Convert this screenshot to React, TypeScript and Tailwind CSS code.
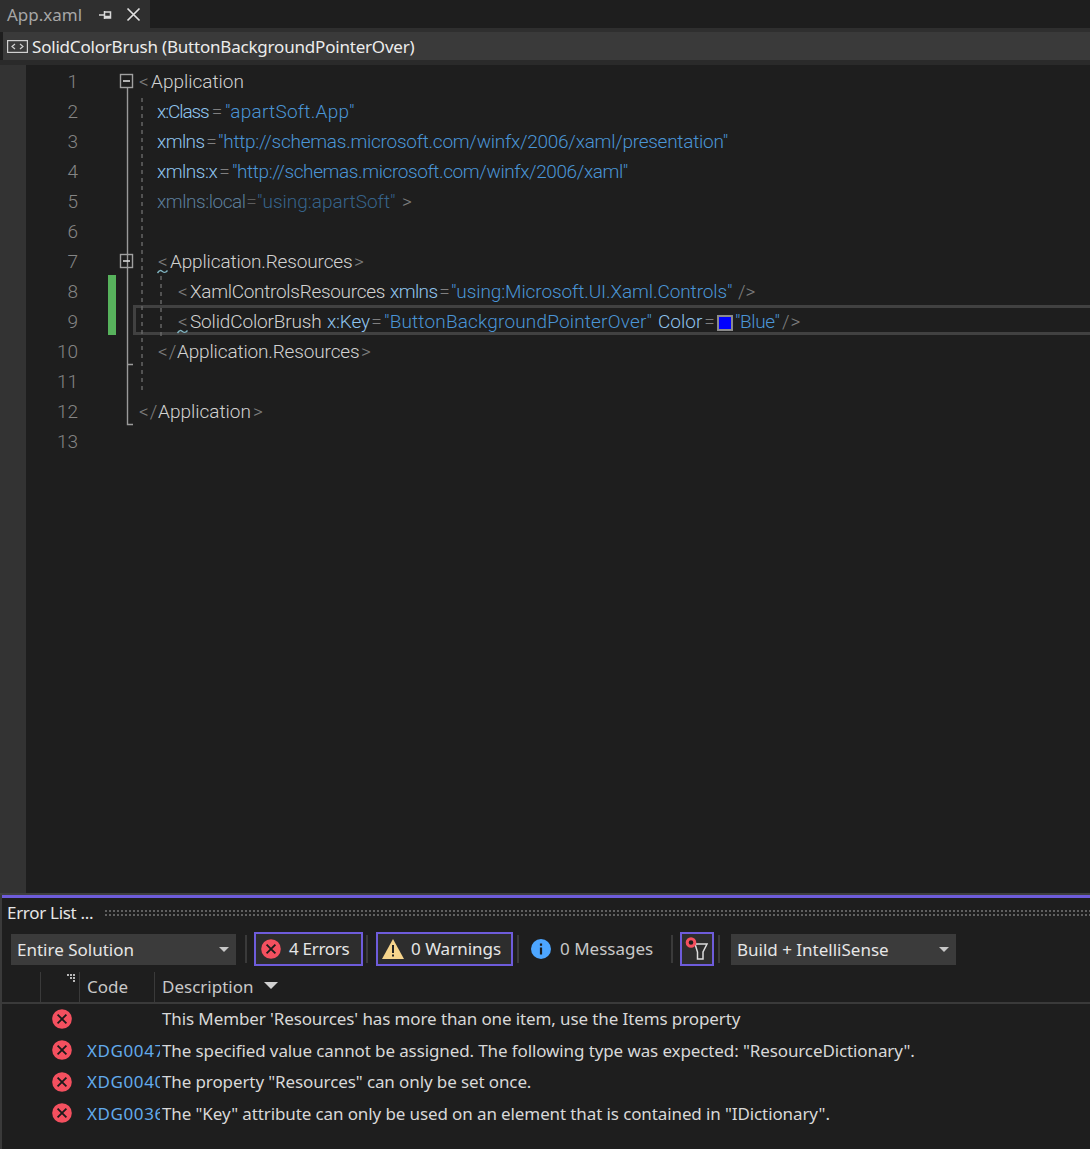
import type { ReactNode } from "react";

const uiFont = "font-['Noto_Sans',sans-serif]";

const BR = "text-[#7f7f7f]";
const TAG = "text-[#d2d2d2]";
const ATTR = "text-[#8fc4ef]";
const STR = "text-[#4a95d6]";

function ErrorIcon({ size = 20 }: { size?: number }) {
  return (
    <svg width={size} height={size} viewBox="0 0 20 20">
      <circle cx="10" cy="10" r="9.8" fill="#f4505f" />
      <path d="M5.6 5.6 14.4 14.4M14.4 5.6 5.6 14.4" stroke="#1a1a1a" strokeWidth="1.8" />
    </svg>
  );
}

function Sep() {
  return <div className="w-[2px] h-[28px] bg-[#3a3a3a] shrink-0" />;
}

function Caret() {
  return <div className="w-0 h-0 border-x-[5px] border-x-transparent border-t-[5px] border-t-[#c8c8c8]" />;
}

function Combo({ label, width }: { label: string; width: string }) {
  return (
    <div className={`${width} h-[31px] bg-[#3b3b3b] flex items-center justify-between pl-[6px] pr-[7px] text-[17px] text-[#e6e6e6]`}>
      <span className="mt-[1px]">{label}</span>
      <Caret />
    </div>
  );
}

// "<" and "</" get a fixed slot, the Segoe glyphs are wider than Roboto's
function Open() {
  return <span className={`${BR} w-[12px]`}>&lt;</span>;
}
function Close() {
  return <span className={`${BR} w-[19px] tracking-[1px]`}>&lt;/</span>;
}

const codeLines: ReactNode[] = [
  <span className="pl-[1px] flex"><Open /><span className={TAG}>Application</span></span>,
  <span className="pl-[19px] flex">
    <span className={`${ATTR} w-[52px] tracking-[-1.1px]`}>x:Class</span>
    <span className={`${BR} w-[16px] text-center`}>=</span>
    <span className={`${STR} tracking-[0.25px]`}>"apartSoft.App"</span>
  </span>,
  <span className="pl-[19px] flex">
    <span className={`${ATTR} w-[48px] tracking-[-0.6px]`}>xmlns</span>
    <span className={`${BR} w-[13px] text-center`}>=</span>
    <span className={`${STR} tracking-[-0.26px]`}>"http://schemas.microsoft.com/winfx/2006/xaml/presentation"</span>
  </span>,
  <span className="pl-[19px] flex">
    <span className={`${ATTR} w-[60px] tracking-[-0.5px]`}>xmlns:x</span>
    <span className={`${BR} w-[15px] text-center`}>=</span>
    <span className={`${STR} tracking-[-0.4px]`}>"http://schemas.microsoft.com/winfx/2006/xaml"</span>
  </span>,
  <span className="pl-[19px] flex">
    <span className="text-[#5b7d9a] w-[89px] tracking-[-0.45px]">xmlns:local</span>
    <span className="text-[#5c5c5c] w-[11px] text-center">=</span>
    <span className="text-[#36648c] w-[145px]">"using:apartSoft"</span>
    <span className={BR}>&gt;</span>
  </span>,
  <span />,
  <span className="pl-[20px] flex">
    <Open />
    <span className={`${TAG} w-[184px] tracking-[-0.15px]`}>Application.Resources</span>
    <span className={BR}>&gt;</span>
  </span>,
  <span className="pl-[40px] flex">
    <Open />
    <span className={`${TAG} w-[200px] tracking-[-0.3px]`}>XamlControlsResources</span>
    <span className={`${ATTR} w-[48px] tracking-[-0.6px]`}>xmlns</span>
    <span className={`${BR} w-[13px] text-center`}>=</span>
    <span className={`${STR} w-[287px] tracking-[-0.1px]`}>"using:Microsoft.UI.Xaml.Controls"</span>
    <span className={BR}>/&gt;</span>
  </span>,
  <span className="pl-[40px] flex items-center">
    <Open />
    <span className={`${TAG} w-[137px] tracking-[-0.15px]`}>SolidColorBrush</span>
    <span className={`${ATTR} w-[42px] tracking-[-0.2px]`}>x:Key</span>
    <span className={`${BR} w-[15px] text-center`}>=</span>
    <span className={`${STR} w-[274px] tracking-[0.17px]`}>"ButtonBackgroundPointerOver"</span>
    <span className={`${ATTR} w-[44px]`}>Color</span>
    <span className={`${BR} w-[15px] text-center`}>=</span>
    <span className="w-[16px] h-[16px] shrink-0 bg-[#0000ff] border-2 border-[#8a8a8a] mr-[2px] mt-[2px]" />
    <span className={`${STR} w-[47px] tracking-[-0.4px]`}>"Blue"</span>
    <span className={`${BR} tracking-[1px]`}>/&gt;</span>
  </span>,
  <span className="pl-[20px] flex">
    <Close />
    <span className={`${TAG} w-[184px] tracking-[-0.15px]`}>Application.Resources</span>
    <span className={BR}>&gt;</span>
  </span>,
  <span />,
  <span className="pl-[1px] flex">
    <Close />
    <span className={`${TAG} w-[95px]`}>Application</span>
    <span className={BR}>&gt;</span>
  </span>,
  <span />,
];

const errors = [
  { code: "", text: "This Member 'Resources' has more than one item, use the Items property" },
  { code: "XDG0047", text: 'The specified value cannot be assigned. The following type was expected: "ResourceDictionary".' },
  { code: "XDG0040", text: 'The property "Resources" can only be set once.' },
  { code: "XDG0036", text: 'The "Key" attribute can only be used on an element that is contained in "IDictionary".' },
];

function EditorMarks() {
  return (
    <svg className="absolute left-0 top-0 pointer-events-none" width="200" height="440" viewBox="0 65 200 440" fill="none">
      {/* outlining */}
      <path d="M127.5 88V424.5H133M127.5 364.5H133" stroke="#9a9a9a" strokeWidth="1.4" />
      <rect x="120.5" y="74.5" width="12" height="13" stroke="#a0a0a0" strokeWidth="1.4" />
      <path d="M123 81h7" stroke="#d8d8d8" strokeWidth="1.6" />
      <rect x="120.5" y="254.5" width="12" height="13" stroke="#a0a0a0" strokeWidth="1.4" />
      <path d="M123 261h7" stroke="#d8d8d8" strokeWidth="1.6" />
      {/* indent guides */}
      <path d="M142 98V392" stroke="#6a6a6a" strokeWidth="1.4" strokeDasharray="4 4" />
      <path d="M161 276V336" stroke="#6a6a6a" strokeWidth="1.4" strokeDasharray="4 4" />
      {/* squiggles */}
      <path d="M157.5 273c2-3 3-3 5 -1.5s3 1.5 5-1" stroke="#7fb2bf" strokeWidth="1.4" />
      <path d="M177.5 333c2-3 3-3 5 -1.5s3 1.5 5-1" stroke="#7fb2bf" strokeWidth="1.4" />
    </svg>
  );
}

export default function App() {
  return (
    <div className={`${uiFont} w-[1090px] h-[1149px] bg-[#1e1e1e] flex flex-col overflow-hidden`}>
      {/* tab strip */}
      <div className="h-[28px] flex shrink-0">
        <div className="w-[150px] bg-[#2f2f2f] flex items-center pl-[7px] text-[17px] text-[#a6a6a6]">
          <span className="mt-[1px]">App.xaml</span>
          <svg className="ml-[17px] mt-[1px]" width="14" height="14" viewBox="0 0 14 14" fill="none" stroke="#d8d8d8" strokeWidth="1.5">
            <path d="M0 7h5M5.5 3v8M5.5 4h6v6h-6M5.5 8.5h6" />
          </svg>
          <svg className="ml-[13px] mt-[1px]" width="15" height="15" viewBox="0 0 15 15" fill="none" stroke="#e0e0e0" strokeWidth="1.7">
            <path d="M1.5 1.5 13.5 13.5M13.5 1.5 1.5 13.5" />
          </svg>
        </div>
      </div>
      <div className="h-[4px] bg-[#2f2f2f] shrink-0" />
      {/* navigation bar */}
      <div className="h-[28px] bg-[#3a3a3a] ml-[3px] flex items-center pl-[4px] text-[17px] tracking-[-0.2px] text-[#ececec] shrink-0">
        <svg width="21" height="15" viewBox="0 0 21 15" fill="none" stroke="#d0d0d0" strokeWidth="1.2">
          <rect x="0.6" y="1.6" width="19.8" height="11.8" />
          <path d="M8 5 5 7.5 8 10M13 5l3 2.5L13 10" />
        </svg>
        <span className="ml-[4px] mt-[1px]">SolidColorBrush (ButtonBackgroundPointerOver)</span>
      </div>
      <div className="h-[5px] bg-[#2a2a2a] shrink-0" />

      {/* editor */}
      <div className="relative flex-1 flex">
        <div className="w-[26px] bg-[#333333] shrink-0" />
        <div className="flex-1 pt-[2px]">
          {codeLines.map((line, i) => (
            <div key={i} className="h-[30px] flex items-center text-[19px] font-light whitespace-pre font-['Roboto',sans-serif]">
              <div className="w-[52px] text-right text-[#858585] shrink-0">{i + 1}</div>
              <div className="w-[60px] shrink-0" />
              {line}
            </div>
          ))}
        </div>
        <div className="absolute left-[108px] top-[210px] w-[8px] h-[60px] bg-[#57b25c]" />
        <div className="absolute left-[133px] top-[240px] right-0 h-[30px] border-[3px] border-r-0 border-[#414141]" />
        <EditorMarks />
      </div>

      {/* error list */}
      <div className="h-[256px] shrink-0 flex flex-col border-l-2 border-[#3a3a3a] text-[17px]">
        <div className="h-[2px] bg-[#404040] -ml-[2px]" />
        <div className="h-[3px] bg-[#6e5cdb] shrink-0" />
        <div className="h-[30px] flex items-center pl-[5px] shrink-0">
          <span className="text-[#e6e6e6] shrink-0 tracking-[-0.3px]">Error List ...</span>
          <div className="ml-[11px] flex-1 h-[8px] bg-[radial-gradient(#606060_1.2px,transparent_1.2px)] bg-[length:4px_4px]" />
        </div>
        <div className="h-[36px] mt-[3px] flex items-center pl-[9px] shrink-0">
          <Combo label="Entire Solution" width="w-[225px]" />
          <div className="ml-[9px]"><Sep /></div>
          <div className="ml-[7px] w-[109px] h-[34px] border-2 border-[#6e5cdb] bg-[#2d2d2d] flex items-center pl-[5px] text-[#e6e6e6] tracking-[-0.3px]">
            <ErrorIcon />
            <span className="ml-[8px]">4 Errors</span>
          </div>
          <div className="ml-[3px]"><Sep /></div>
          <div className="ml-[8px] w-[137px] h-[34px] border-2 border-[#6e5cdb] bg-[#2d2d2d] flex items-center pl-[4px] text-[#e6e6e6]">
            <svg width="22" height="20" viewBox="0 0 22 20">
              <path d="M11 0 22 20H0Z" fill="#f6d48c" />
              <path d="M11 6v8M11 15.5v2" stroke="#222" strokeWidth="2" />
            </svg>
            <span className="ml-[7px]">0 Warnings</span>
          </div>
          <div className="ml-[4px]"><Sep /></div>
          <div className="ml-[12px] flex items-center w-[140px] text-[#c8c8c8]">
            <svg width="20" height="20" viewBox="0 0 20 20">
              <circle cx="10" cy="10" r="10" fill="#4da6ff" />
              <path d="M10 8.5v7M10 4.5v2.2" stroke="#1a1a1a" strokeWidth="2.2" />
            </svg>
            <span className="ml-[9px]">0 Messages</span>
          </div>
          <Sep />
          <div className="ml-[7px] w-[34px] h-[34px] border-2 border-[#6e5cdb] bg-[#2d2d2d] flex items-center justify-center">
            <svg width="30" height="30" viewBox="0 0 30 30" fill="none">
              <path d="M13 10H25L21 18V25H15.5V18Z" stroke="#dcdcdc" strokeWidth="1.5" />
              <circle cx="9" cy="8.5" r="3.8" fill="#1e1e1e" stroke="#f4505f" strokeWidth="3" />
            </svg>
          </div>
          <div className="ml-[4px]"><Sep /></div>
          <div className="ml-[11px]"><Combo label="Build + IntelliSense" width="w-[225px]" /></div>
        </div>
        <div className="h-[37px] flex items-stretch border-b-2 border-[#3a3a3a] pt-[5px] shrink-0 text-[#c8c8c8]">
          <div className="w-[39px] border-r border-[#3a3a3a]" />
          <div className="w-[39px] border-r border-[#3a3a3a] relative">
            <svg className="absolute right-[4px] top-[2px]" width="8" height="8" viewBox="0 0 8 8" fill="#b8b8b8">
              <path d="M0 0h2v2H0zM3 0h2v2H3zM6 0h2v2H6zM3 3h2v2H3zM6 3h2v2H6zM6 6h2v2H6z" />
            </svg>
          </div>
          <div className="w-[75px] border-r border-[#3a3a3a] pl-[7px] flex items-center">Code</div>
          <div className="pl-[7px] flex items-center">
            Description
            <svg className="ml-[11px] mb-[4px]" width="14" height="7" viewBox="0 0 14 7" fill="#d0d0d0">
              <path d="M0 0h14L7 7Z" />
            </svg>
          </div>
        </div>
        <div className="-mt-[1px] tracking-[-0.11px]">
          {errors.map((e) => (
            <div key={e.text} className="h-[31.5px] flex items-center">
              <div className="w-[78px] pl-[50px] shrink-0 flex items-center"><ErrorIcon /></div>
              <div className="w-[80px] pl-[7px] shrink-0 overflow-hidden whitespace-nowrap tracking-[0.6px] text-[#62abec]">{e.code}</div>
              <div className="pl-[2px] whitespace-nowrap text-[#d8d8d8]">{e.text}</div>
            </div>
          ))}
        </div>
      </div>
    </div>
  );
}
